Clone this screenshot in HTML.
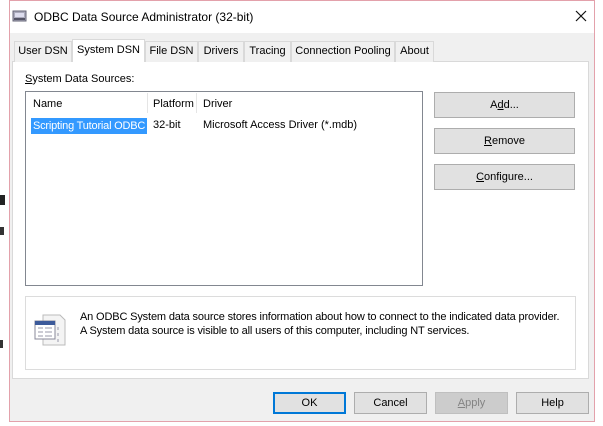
<!DOCTYPE html>
<html><head><style>
*{margin:0;padding:0;box-sizing:border-box}
body{width:603px;height:426px;background:#fff;font-family:"Liberation Sans",sans-serif;font-size:11px;color:#000;position:relative;overflow:hidden}
.a{position:absolute;white-space:nowrap}
.win{left:9px;top:0;width:586px;height:422px;border:1px solid #e3a1ab;background:#f0f0f0}
.title{left:0;top:0;width:584px;height:32px;background:#fff}
.tab{position:absolute;top:41px;height:21px;border:1px solid #d9d9d9;border-bottom:none;background:#f0f0f0;text-align:center;line-height:19px;font-size:11px;white-space:nowrap}
.btn{position:absolute;border:1px solid #adadad;background:#e1e1e1;text-align:center;font-size:11px}
u{text-decoration:underline}
</style></head><body>
<div class="a" style="left:0;top:195px;width:5px;height:10px;background:#222"></div>
<div class="a" style="left:0;top:227px;width:4px;height:8px;background:#333"></div>
<div class="a" style="left:0;top:340px;width:3px;height:8px;background:#333"></div>
<div class="a win">
  <div class="a title"></div>
</div>
<svg class="a" style="left:12px;top:9px" width="16" height="14" viewBox="0 0 16 14"><rect x="1" y="2" width="13" height="10" fill="#aab" stroke="#667"/><rect x="3" y="4" width="9" height="4" fill="#dde"/><rect x="2" y="9" width="11" height="2" fill="#556"/></svg>
<div class="a" style="left:34px;top:10px;font-size:12px">ODBC Data Source Administrator (32-bit)</div>
<svg class="a" style="left:575px;top:10px" width="12" height="12"><path d="M1 1L11 11M11 1L1 11" stroke="#111" stroke-width="1.2"/></svg>
<div class="a" style="left:12px;top:61px;width:577px;height:318px;background:#fff;border:1px solid #d9d9d9"></div>
<div class="tab" style="left:14px;width:58px">User DSN</div>
<div class="tab" style="left:72px;width:73px;top:39px;height:23px;background:#fff;line-height:21px">System DSN</div>
<div class="tab" style="left:145px;width:53px">File DSN</div>
<div class="tab" style="left:198px;width:46px">Drivers</div>
<div class="tab" style="left:244px;width:47px">Tracing</div>
<div class="tab" style="left:291px;width:104px">Connection Pooling</div>
<div class="tab" style="left:395px;width:39px">About</div>
<div class="a" style="left:25px;top:73px"><u>S</u>ystem Data Sources:</div>
<div class="a" style="left:25px;top:91px;width:398px;height:195px;border:1px solid #828790;background:#fff"></div>
<div class="a" style="left:147px;top:93px;width:1px;height:20px;background:#e5e5e5"></div>
<div class="a" style="left:196px;top:93px;width:1px;height:20px;background:#e5e5e5"></div>
<div class="a" style="left:33px;top:98px">Name</div>
<div class="a" style="left:153px;top:98px">Platform</div>
<div class="a" style="left:203px;top:98px">Driver</div>
<div class="a" style="left:31px;top:118px;width:116px;height:16px;background:#3399ff;color:#fff;padding-left:2px;line-height:16px;overflow:hidden;letter-spacing:-0.2px">Scripting Tutorial ODBC</div>
<div class="a" style="left:153px;top:119px">32-bit</div>
<div class="a" style="left:203px;top:119px">Microsoft Access Driver (*.mdb)</div>
<div class="btn" style="left:434px;top:92px;width:141px;height:26px;line-height:24px">A<u>d</u>d...</div>
<div class="btn" style="left:434px;top:128px;width:141px;height:26px;line-height:24px"><u>R</u>emove</div>
<div class="btn" style="left:434px;top:164px;width:141px;height:26px;line-height:24px"><u>C</u>onfigure...</div>
<div class="a" style="left:25px;top:296px;width:551px;height:74px;border:1px solid #dcdcdc"></div>
<svg class="a" style="left:34px;top:313px" width="34" height="34" viewBox="0 0 34 34"><path d="M9 2H26L31 7V32H9Z" fill="#f4f4f4" stroke="#bbb"/><rect x="1" y="8" width="20" height="18" fill="#fff" stroke="#889"/><rect x="1" y="8" width="20" height="4" fill="#3c5a9a"/><path d="M4 15h5M11 15h7M4 19h5M11 19h7M4 23h5M11 23h7" stroke="#99a" stroke-width="1"/><path d="M24 14v3M24 20v3M24 26v3" stroke="#99a"/></svg>
<div class="a" style="left:80px;top:310px;line-height:14px;letter-spacing:-0.15px">An ODBC System data source stores information about how to connect to the indicated data provider.<br>A System data source is visible to all users of this computer, including NT services.</div>
<div class="btn" style="left:273px;top:392px;width:73px;height:22px;border:2px solid #0078d7;line-height:18px">OK</div>
<div class="btn" style="left:354px;top:392px;width:73px;height:22px;line-height:20px">Cancel</div>
<div class="btn" style="left:435px;top:392px;width:73px;height:22px;line-height:20px;background:#ccc;border-color:#bfbfbf;color:#838383"><u>A</u>pply</div>
<div class="btn" style="left:516px;top:392px;width:73px;height:22px;line-height:20px">Help</div>
</body></html>
